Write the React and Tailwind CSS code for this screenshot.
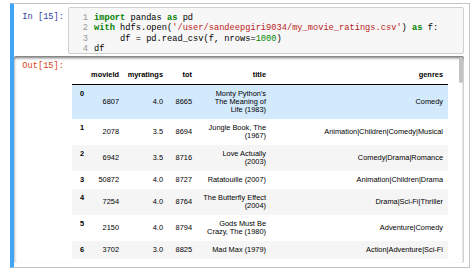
import React from "react";

const mono = { fontFamily: '"Liberation Mono", "DejaVu Sans Mono", monospace' };
const sans = { fontFamily: '"Liberation Sans", Arial, sans-serif' };

const rows = [
  { i: 0, id: "6807", r: "4.0", tot: "8665", title: ["Monty Python's", "The Meaning of", "Life (1983)"], genres: "Comedy" },
  { i: 1, id: "2078", r: "3.5", tot: "8694", title: ["Jungle Book, The", "(1967)"], genres: "Animation|Children|Comedy|Musical" },
  { i: 2, id: "6942", r: "3.5", tot: "8716", title: ["Love Actually", "(2003)"], genres: "Comedy|Drama|Romance" },
  { i: 3, id: "50872", r: "4.0", tot: "8727", title: ["Ratatouille (2007)"], genres: "Animation|Children|Drama" },
  { i: 4, id: "7254", r: "4.0", tot: "8764", title: ["The Butterfly Effect", "(2004)"], genres: "Drama|Sci-Fi|Thriller" },
  { i: 5, id: "2150", r: "4.0", tot: "8794", title: ["Gods Must Be", "Crazy, The (1980)"], genres: "Adventure|Comedy" },
  { i: 6, id: "3702", r: "3.0", tot: "8825", title: ["Mad Max (1979)"], genres: "Action|Adventure|Sci-Fi" },
  { i: 7, id: "30707", r: "4.0", tot: "8834", title: ["Million Dollar Baby", "(2004)"], genres: "Crime|Drama" },
];

function rowBg(i) {
  if (i === 0) return "bg-[#d3e9fc]";
  return i % 2 === 0 ? "bg-[#f5f5f5]" : "bg-white";
}

const Kw = ({ children }) => <span className="text-[#008000] font-bold">{children}</span>;
const Str = ({ children }) => <span className="text-[#ba2121]">{children}</span>;
const Num = ({ children }) => <span className="text-[#008800]">{children}</span>;

export default function App() {
  return (
    <div className="w-[474px] h-[271px] bg-white overflow-hidden pt-[3px] pl-[10px]">
      <div className="w-[460px] h-[265px] border border-[#c4c4c4] border-l-[4px] border-l-[#42a5f5] flex flex-col">
        {/* input */}
        <div className="flex pt-[3px] pr-[5px]">
          <div
            className="w-[54px] shrink-0 text-right pr-[4px] pt-[5px] text-[8.7px] leading-[10.3px] text-[#303f9f]"
            style={mono}
          >
            In&nbsp;[15]:
          </div>
          <div
            className="flex-1 h-[47px] bg-[#f7f7f7] border border-[#cfcfcf] rounded-[2px] flex pt-[5px] text-[8.7px] leading-[10.3px] text-black"
            style={mono}
          >
            <div className="w-[22px] text-right pr-[3px] text-[#999]">
              <div>1</div>
              <div>2</div>
              <div>3</div>
              <div>4</div>
            </div>
            <div className="pl-[3px] whitespace-pre">
              <div>
                <Kw>import</Kw> pandas <Kw>as</Kw> pd
              </div>
              <div>
                <Kw>with</Kw> hdfs.open(<Str>'/user/sandeepgiri9034/my_movie_ratings.csv'</Str>) <Kw>as</Kw> f:
              </div>
              <div>
                {"     df = pd.read_csv(f, nrows="}
                <Num>1000</Num>)
              </div>
              <div>df</div>
            </div>
          </div>
        </div>

        {/* output */}
        <div className="relative mt-[2px] mr-[5px] h-[207px] flex overflow-hidden rounded-[2px] shadow-[inset_0_2px_3px_rgba(0,0,0,0.55)]">
          <div
            className="w-[58px] shrink-0 text-right pr-[8px] pt-[5px] text-[8.7px] leading-[10.3px] text-[#d84315]"
            style={mono}
          >
            Out[15]:
          </div>
          <div className="pt-[10px]">
            <table className="table-fixed border-collapse text-[7.4px] leading-[8px] text-black" style={sans}>
              <colgroup>
                <col className="w-[18px]" />
                <col className="w-[34px]" />
                <col className="w-[44px]" />
                <col className="w-[29px]" />
                <col className="w-[74px]" />
                <col className="w-[177px]" />
              </colgroup>
              <thead>
                <tr className="border-b border-black">
                  <th className="py-[5px]" />
                  <th className="py-[5px] pr-[5px] text-right font-bold">movieId</th>
                  <th className="py-[5px] pr-[5px] text-right font-bold">myratings</th>
                  <th className="py-[5px] pr-[5px] text-right font-bold">tot</th>
                  <th className="py-[5px] pr-[5px] text-right font-bold">title</th>
                  <th className="py-[5px] pr-[5px] text-right font-bold">genres</th>
                </tr>
              </thead>
              <tbody>
                {rows.map((row) => (
                  <tr key={row.i} className={rowBg(row.i)}>
                    <th className="py-[5px] pl-[8px] text-left align-top font-bold">{row.i}</th>
                    <td className="py-[5px] pr-[5px] text-right align-middle">{row.id}</td>
                    <td className="py-[5px] pr-[5px] text-right align-middle">{row.r}</td>
                    <td className="py-[5px] pr-[5px] text-right align-middle">{row.tot}</td>
                    <td className="py-[5px] pr-[5px] text-right align-middle whitespace-nowrap">
                      {row.title.map((t, k) => (
                        <div key={k}>{t}</div>
                      ))}
                    </td>
                    <td className="py-[5px] pr-[5px] text-right align-middle whitespace-nowrap">{row.genres}</td>
                  </tr>
                ))}
              </tbody>
            </table>
          </div>
          {/* scrollbar */}
          <div className="absolute right-[1px] top-[1px] w-[4px] h-[26px] rounded-[2px] bg-[#c2c2c2]" />
        </div>
      </div>
    </div>
  );
}
